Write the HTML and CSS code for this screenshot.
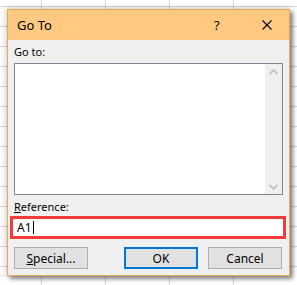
FILE: index.html
```html
<!doctype html>
<html lang="en">
<head>
    <meta charset="UTF-8">
    <title>Go To</title>
    <link rel="stylesheet" href="styles.css">
</head>
<body>
<div class="dialog">
    <div class="dialog__title">
        <span class="dialog__caption">Go To</span>
        <span class="dialog__help">?</span>
        <span class="dialog__close">
            <svg width="10" height="10" viewBox="0 0 10 10">
                <path d="M0.5 0.5 L9.5 9.5 M9.5 0.5 L0.5 9.5" stroke="#000" stroke-width="1.1" fill="none"/>
            </svg>
        </span>
    </div>
    <div class="dialog__body">
        <div class="dialog__label">Go to:</div>
        <div class="listbox">
            <div class="listbox__area"></div>
            <div class="listbox__scroll">
                <svg width="9" height="6" viewBox="0 0 9 6">
                    <path d="M0.5 5 L4.5 1 L8.5 5" stroke="#c2c2c2" stroke-width="1.8" fill="none"/>
                </svg>
                <svg width="9" height="6" viewBox="0 0 9 6">
                    <path d="M0.5 1 L4.5 5 L8.5 1" stroke="#c2c2c2" stroke-width="1.8" fill="none"/>
                </svg>
            </div>
        </div>
        <div class="dialog__label dialog__label_ref"><u>R</u>eference:</div>
        <div class="reference">
            <div class="reference__input">A1<span class="reference__caret"></span></div>
        </div>
        <div class="dialog__buttons">
            <div class="btn"><u>S</u>pecial...</div>
            <div class="btn btn_default">OK</div>
            <div class="btn">Cancel</div>
        </div>
    </div>
</div>
</body>
</html>
```

FILE: styles.css
```css
html, body {
    margin: 0;
    height: 100%;
}

body {
    width: 297px;
    height: 285px;
    overflow: hidden;
    padding: 9px 0 0 7px;
    box-sizing: border-box;
    font-family: "Noto Sans", "Open Sans", sans-serif;
    background-color: #ffffff;
    background-image:
        repeating-linear-gradient(to right, transparent 0, transparent 41px, #d6d6d6 41px, #d6d6d6 42px, transparent 42px, transparent 64px),
        repeating-linear-gradient(to bottom, transparent 0, transparent 6px, #d6d6d6 6px, #d6d6d6 7px, transparent 7px, transparent 20px);
}

.dialog {
    width: 283px;
    height: 267px;
    box-sizing: border-box;
    border: 1px solid #e9a852;
    background-color: #f0f0f0;
    box-shadow: 0 0 7px rgba(0, 0, 0, 0.25), 3px 3px 4px rgba(0, 0, 0, 0.4);
    display: flex;
    flex-direction: column;
}

.dialog__title {
    height: 30px;
    background-color: #ffc982;
    display: flex;
    align-items: center;
    padding-left: 9px;
    font-size: 13px;
    color: #000;
}

.dialog__caption {
    flex-grow: 1;
}

.dialog__help {
    width: 10px;
    font-size: 13px;
    margin-right: 38px;
}

.dialog__close {
    display: flex;
    margin-right: 17px;
}

.dialog__body {
    padding: 5px 6px 0 6px;
    font-size: 11px;
    color: #000;
}

.dialog__label {
    height: 14px;
    line-height: 14px;
    margin-bottom: 4px;
}

.dialog__label_ref {
    margin-top: 5px;
    margin-bottom: 2px;
}

.listbox {
    height: 132px;
    box-sizing: border-box;
    border: 1px solid #828790;
    background-color: #ffffff;
    display: flex;
}

.listbox__area {
    flex-grow: 1;
}

.listbox__scroll {
    width: 17px;
    background-color: #f0f0f0;
    display: flex;
    flex-direction: column;
    justify-content: space-between;
    align-items: center;
    padding: 5px 0 4px;
}

.reference {
    height: 23px;
    box-sizing: border-box;
    margin: 0 -3px 0 -4px;
    border: 3px solid #f23c3c;
    background-color: #ffffff;
}

.reference__input {
    height: 17px;
    line-height: 17px;
    padding-left: 4px;
    font-size: 12px;
    display: flex;
    align-items: center;
}

.reference__caret {
    display: inline-block;
    width: 1px;
    height: 13px;
    margin-left: 1px;
    background-color: #000;
}

.dialog__buttons {
    display: flex;
    gap: 10px;
    margin-top: 8px;
    padding-right: 1px;
}

.btn {
    width: 74px;
    height: 22px;
    box-sizing: border-box;
    border: 1px solid #adadad;
    background-color: #e1e1e1;
    display: flex;
    justify-content: center;
    align-items: center;
    font-size: 12px;
}

.btn:first-child {
    margin-right: auto;
}

.btn_default {
    border: 2px solid #0078d7;
}
```
